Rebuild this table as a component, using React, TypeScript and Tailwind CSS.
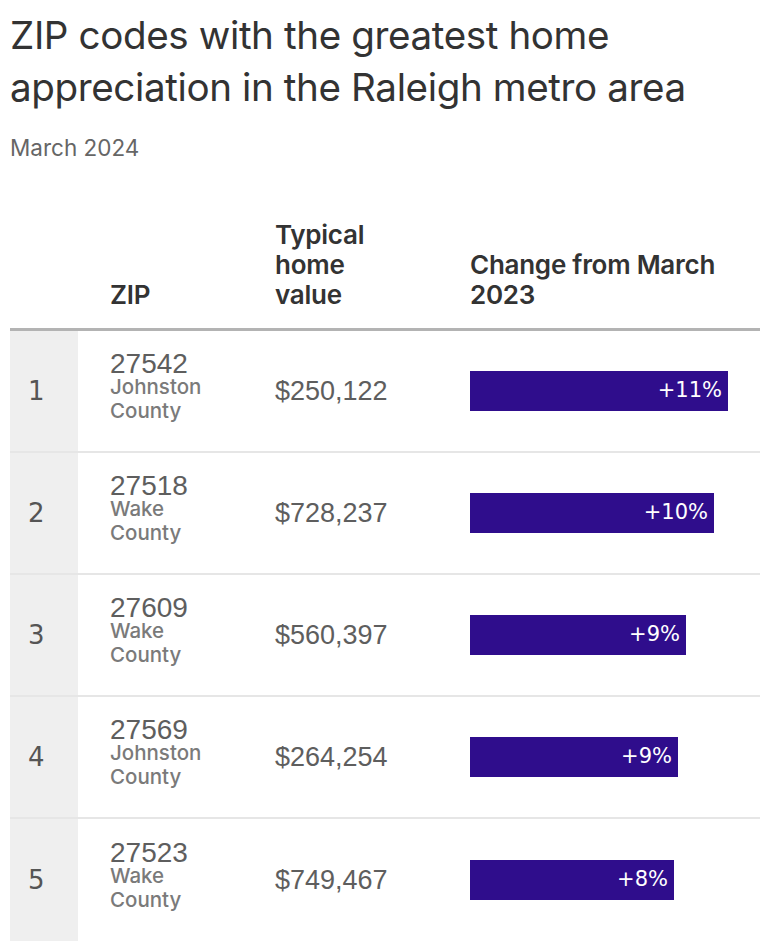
const rows = [
  { rank: 1, zip: "27542", county: "Johnston", value: "$250,122", change: "+11%", bar: 258 },
  { rank: 2, zip: "27518", county: "Wake", value: "$728,237", change: "+10%", bar: 244 },
  { rank: 3, zip: "27609", county: "Wake", value: "$560,397", change: "+9%", bar: 216 },
  { rank: 4, zip: "27569", county: "Johnston", value: "$264,254", change: "+9%", bar: 208 },
  { rank: 5, zip: "27523", county: "Wake", value: "$749,467", change: "+8%", bar: 204 },
];

export default function App() {
  return (
    <div className="w-[770px] bg-white px-[10px] pt-[9px] font-['Inter',sans-serif] text-[#333]">
      <h1 className="text-[38.6px] leading-[52px] tracking-[-0.01em] font-normal">
        ZIP codes with the greatest home appreciation in the Raleigh metro area
      </h1>
      <p className="mt-[21px] text-[22.5px] leading-[28px] text-[#666]">March 2024</p>

      <div className="mt-[58px] w-[750px]">
        <div className="grid grid-cols-[68px_197px_195px_1fr] items-end border-b-[3px] border-[#b3b3b3] pb-[18px] text-[26px] leading-[30px] font-semibold tracking-[-0.01em] text-[#333]">
          <div />
          <div className="pl-8">ZIP</div>
          <div className="max-w-[130px]">Typical home value</div>
          <div>Change from March 2023</div>
        </div>

        {rows.map((r, i) => (
          <div
            key={r.rank}
            className={
              "grid h-[122px] grid-cols-[68px_197px_195px_1fr] items-center " +
              (i < rows.length - 1 ? "border-b-2 border-[#e6e6e6]" : "")
            }
          >
            <div className="flex h-full items-center bg-[#efefef] pl-[18px] font-['DejaVu_Sans',sans-serif] text-[26px] text-[#555]">
              {r.rank}
            </div>
            <div className="pl-8 pb-[8px]">
              <div className="font-['Liberation_Sans',sans-serif] text-[28px] leading-[23px] text-[#5e5e5e]">
                {r.zip}
              </div>
              <div className="text-[20.5px] leading-[24px] font-medium text-[#7a7a7a]">
                {r.county}
                <br />
                County
              </div>
            </div>
            <div className="font-['Liberation_Sans',sans-serif] text-[27px] text-[#5e5e5e]">{r.value}</div>
            <div>
              <div
                className="flex h-[40px] items-center justify-end bg-[#2f0d8c] pr-[6px] font-['DejaVu_Sans',sans-serif] text-[21px] text-white"
                style={{ width: r.bar }}
              >
                {r.change}
              </div>
            </div>
          </div>
        ))}
      </div>
    </div>
  );
}
